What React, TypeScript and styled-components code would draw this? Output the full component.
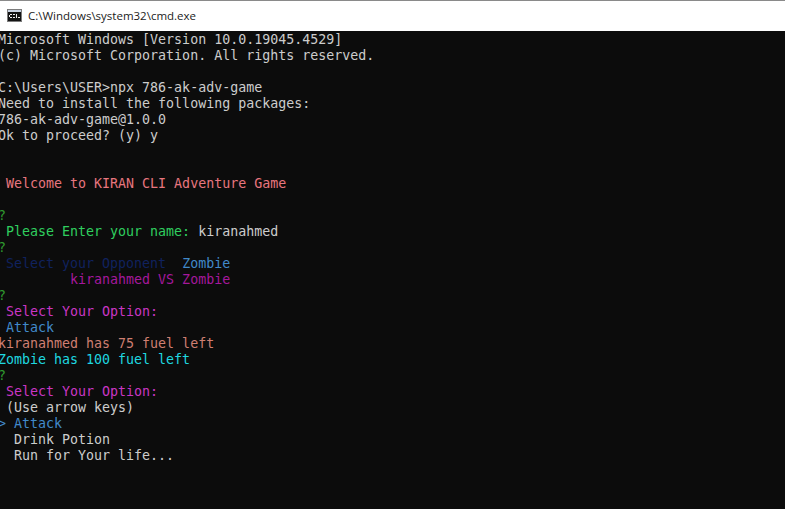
import styled, { createGlobalStyle } from 'styled-components'

const Global = createGlobalStyle`
    html, body {
        margin: 0;
        padding: 0;
        background: #0c0c0c;
    }
`

const Window = styled.div`
    display: flex;
    flex-direction: column;
    width: 785px;
    height: 509px;
    overflow: hidden;
    background: #0c0c0c;
`

const TitleBar = styled.div`
    display: flex;
    align-items: center;
    flex-shrink: 0;
    gap: 6px;
    height: 31px;
    padding: 0 0 2px 7px;
    box-sizing: border-box;
    background: #fff;
    border-top: 1px solid #8a8a8a;
    color: #1c1c1c;
    font-family: "Open Sans", sans-serif;
    font-size: 11.5px;
`

const Output = styled.div`
    margin-left: -2px;
    padding-top: 1px;
    font-family: "DejaVu Sans Mono", monospace;
    font-size: 13.3px;
    line-height: 16px;
    color: #cccccc;
`

const Line = styled.div`
    height: 16px;
    white-space: pre;
`

const Ink = styled.span<{ $color: string }>`
    color: ${(p) => p.$color};
`

const CmdIcon = () => (
    <svg width="15" height="13" viewBox="0 0 15 13">
        <rect x="0.5" y="0.5" width="14" height="12" fill="#141414" stroke="#7c7c7c" />
        <rect x="1" y="1" width="13" height="2" fill="#c9d3e2" />
        <path d="M3 5h2v1H3v2h2v1H3V8H2V6h1zM6 5h2v1H6zM6 8h2v1H6zM9 5h1v4H9zM11 8h2v1h-2z" fill="#ededed" />
    </svg>
)

const magenta = '#c936c4'
const purple = '#a5189c'
const blue = '#4189c9'
const green = '#2f9a2f'
const brightGreen = '#2fce5f'
const salmon = '#e8767f'

const App = () => {
    return (
        <Window>
            <Global />
            <TitleBar>
                <CmdIcon />
                C:\Windows\system32\cmd.exe
            </TitleBar>
            <Output>
                <Line>Microsoft Windows [Version 10.0.19045.4529]</Line>
                <Line>(c) Microsoft Corporation. All rights reserved.</Line>
                <Line />
                <Line>{'C:\\Users\\USER>npx 786-ak-adv-game'}</Line>
                <Line>Need to install the following packages:</Line>
                <Line>786-ak-adv-game@1.0.0</Line>
                <Line>Ok to proceed? (y) y</Line>
                <Line />
                <Line />
                <Line><Ink $color={salmon}> Welcome to KIRAN CLI Adventure Game</Ink></Line>
                <Line />
                <Line><Ink $color={green}>?</Ink></Line>
                <Line><Ink $color={brightGreen}> Please Enter your name: </Ink>kiranahmed</Line>
                <Line><Ink $color={green}>?</Ink></Line>
                <Line><Ink $color="#10225e"> Select your Opponent  </Ink><Ink $color={blue}>Zombie</Ink></Line>
                <Line><Ink $color={purple}>         kiranahmed VS Zombie</Ink></Line>
                <Line><Ink $color={green}>?</Ink></Line>
                <Line><Ink $color={magenta}> Select Your Option:</Ink></Line>
                <Line><Ink $color={blue}> Attack</Ink></Line>
                <Line><Ink $color="#cf7f72">kiranahmed has 75 fuel left</Ink></Line>
                <Line><Ink $color="#1fd8e0">Zombie has 100 fuel left</Ink></Line>
                <Line><Ink $color={green}>?</Ink></Line>
                <Line><Ink $color={magenta}> Select Your Option:</Ink></Line>
                <Line> (Use arrow keys)</Line>
                <Line><Ink $color={blue}>{'> Attack'}</Ink></Line>
                <Line>  Drink Potion</Line>
                <Line>  Run for Your life...</Line>
            </Output>
        </Window>
    )
}

export default App
